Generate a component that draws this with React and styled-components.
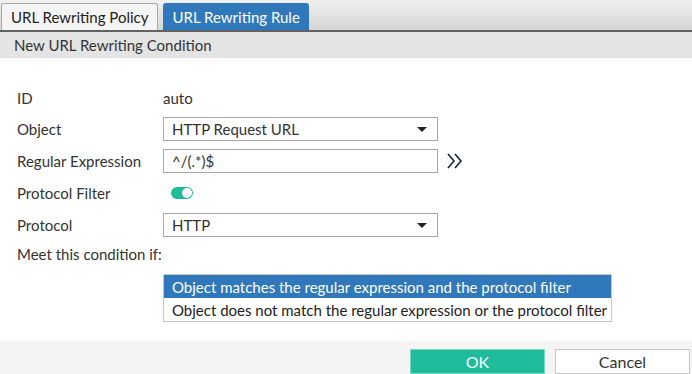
import React from 'react'
import styled, { createGlobalStyle } from 'styled-components'

const GlobalStyle = createGlobalStyle`
  html, body {
    margin: 0;
    padding: 0;
    background: #fff;
  }
  body {
    font-family: Lato, "Open Sans", sans-serif;
    font-size: 15px;
    color: #333;
  }
`

const Page = styled.div`
  width: 692px;
  height: 374px;
  display: flex;
  flex-direction: column;
  overflow: hidden;
`

const TabStrip = styled.div`
  height: 30px;
  display: flex;
  align-items: flex-end;
  gap: 5px;
  padding-left: 1px;
  background: linear-gradient(#f0f0f0, #d6d6d6);
  border-bottom: 2px solid #616161;
`

const Tab = styled.div`
  height: 27px;
  box-sizing: border-box;
  padding: 0 8px 0 9px;
  display: flex;
  align-items: center;
  font-size: 15px;
  border-radius: 3px 3px 0 0;
  background: ${(p) => (p.$active ? '#2f78bb' : '#f4f4f4')};
  color: ${(p) => (p.$active ? '#fff' : '#222')};
  border: 1px solid ${(p) => (p.$active ? '#2f78bb' : '#a9a9a9')};
  border-bottom: none;
`

const SubHeader = styled.div`
  height: 26px;
  background: #e4e4e4;
  padding-left: 14px;
  display: flex;
  align-items: center;
  font-size: 15px;
  color: #333;
`

const Form = styled.div`
  padding: 29px 0 0 17px;
  display: flex;
  flex-direction: column;
  gap: 8px;
`

const Row = styled.div`
  display: grid;
  grid-template-columns: 146px auto 1fr;
  align-items: center;
  min-height: ${(p) => p.$h || 24}px;
`

const Label = styled.div`
  color: #333;
`

const Value = styled.div`
  color: #333;
`

const Select = styled.div`
  width: 275px;
  height: 24px;
  box-sizing: border-box;
  border: 1px solid #a9a9a9;
  padding: 0 8px 0 8px;
  display: flex;
  align-items: center;
  justify-content: space-between;
  background: #fff;
`

const Caret = styled.span`
  width: 0;
  height: 0;
  border-left: 5px solid transparent;
  border-right: 5px solid transparent;
  border-top: 5px solid #222;
  margin-right: 2px;
`

const TextInput = styled.div`
  width: 275px;
  height: 24px;
  box-sizing: border-box;
  border: 1px solid #a9a9a9;
  padding: 0 8px;
  display: flex;
  align-items: center;
`

const ExpandIcon = styled.svg`
  margin-left: 8px;
`

const Toggle = styled.div`
  width: 22px;
  height: 12px;
  margin-left: 8px;
  border-radius: 6px;
  background: #1fbc9c;
  position: relative;
  &::after {
    content: '';
    position: absolute;
    right: 1px;
    top: 1px;
    width: 10px;
    height: 10px;
    border-radius: 50%;
    background: #fff;
  }
`

const ConditionList = styled.div`
  margin: 11px 0 0 163px;
  width: 449px;
  box-sizing: border-box;
  border: 1px solid #c8c8c8;
`

const Option = styled.div`
  height: 23px;
  box-sizing: border-box;
  padding-left: 8px;
  display: flex;
  align-items: center;
  background: ${(p) => (p.$selected ? '#2f78bb' : '#fff')};
  color: ${(p) => (p.$selected ? '#fff' : '#222')};
`

const Footer = styled.div`
  margin-top: auto;
  height: 33px;
  background: #f4f4f4;
  display: flex;
  justify-content: flex-end;
  align-items: flex-start;
  gap: 10px;
  padding: 8px 2px 0 0;
  box-sizing: border-box;
`

const Button = styled.button`
  width: 135px;
  height: 25px;
  font-family: inherit;
  font-size: 16px;
  border: 1px solid ${(p) => (p.$primary ? '#7bd8c3' : '#c8c8c8')};
  background: ${(p) => (p.$primary ? '#1fbc9c' : '#fff')};
  color: ${(p) => (p.$primary ? '#fff' : '#333')};
  box-shadow: ${(p) => (p.$primary ? 'inset 0 0 0 1px #1fbc9c' : 'none')};
  padding: 0;
`

export default function App() {
  return (
    <Page>
      <GlobalStyle />
      <TabStrip>
        <Tab>URL Rewriting Policy</Tab>
        <Tab $active>URL Rewriting Rule</Tab>
      </TabStrip>
      <SubHeader>New URL Rewriting Condition</SubHeader>
      <Form>
        <Row $h={22}>
          <Label>ID</Label>
          <Value>auto</Value>
        </Row>
        <Row>
          <Label>Object</Label>
          <Select>
            HTTP Request URL
            <Caret />
          </Select>
        </Row>
        <Row>
          <Label>Regular Expression</Label>
          <TextInput>^/(.*)$</TextInput>
          <ExpandIcon width="17" height="16" viewBox="0 0 17 16">
            <polyline points="2,1 8,8 2,15" fill="none" stroke="#1b2236" strokeWidth="1.6" />
            <polyline points="9,1 15,8 9,15" fill="none" stroke="#1b2236" strokeWidth="1.6" />
          </ExpandIcon>
        </Row>
        <Row>
          <Label>Protocol Filter</Label>
          <Toggle />
        </Row>
        <Row>
          <Label>Protocol</Label>
          <Select>
            HTTP
            <Caret />
          </Select>
        </Row>
        <Row $h={18}>
          <Label>Meet this condition if:</Label>
        </Row>
      </Form>
      <ConditionList>
        <Option $selected>Object matches the regular expression and the protocol filter</Option>
        <Option>Object does not match the regular expression or the protocol filter</Option>
      </ConditionList>
      <Footer>
        <Button $primary>OK</Button>
        <Button>Cancel</Button>
      </Footer>
    </Page>
  )
}
